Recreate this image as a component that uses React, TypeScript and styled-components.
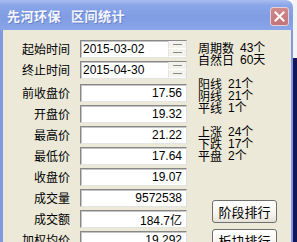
import React from "react";
import styled, { createGlobalStyle } from 'styled-components'

const GlobalStyle = createGlobalStyle`
  body {
    margin: 0;
    background: #ffffff;
    font-family: "Noto Sans CJK SC", "Liberation Sans", sans-serif;
  }
`

const frame = '#8099e0'

const Screen = styled.div`display: flex;
  width: 297px;
  height: 242px;
  overflow: hidden;`
const Window = styled.div`width: 293px;
  display: flex;
  flex-direction: column;`
const TitleBar = styled.div`height: 30px;
  flex: none;
  display: flex;
  align-items: center;
  justify-content: space-between;
  padding: 0 4px 0 7px;
  border-top-right-radius: 7px;
  background: linear-gradient(180deg, #a9bdf0 0%, #8aa5e8 18%, #7f9ce4 60%, #8ba6e9 100%);`
const Caption = styled.div`display: flex;
  gap: 10px;
  color: #f4f6ff;
  font-size: 13px;
  font-weight: bold;
  text-shadow: 1px 1px 0 #6a84cc;
  letter-spacing: 0.5px;`
const CloseButton = styled.div`width: 19px;
  height: 19px;
  margin-top: 3px;
  box-sizing: border-box;
  border: 1px solid #e9d0d4;
  border-radius: 3px;
  background: linear-gradient(180deg, #d08a8c 0%, #c27478 100%);
  display: flex;
  align-items: center;
  justify-content: center;`
const Body = styled.div`flex: 1;
  display: flex;
  background: #ece9d8;
  border-left: 3px solid ${frame};
  border-right: 2px solid ${frame};
  padding-top: 10px;`
const Form = styled.div`display: flex;
  flex-direction: column;
  gap: 5px;`
const Group = styled.div`display: grid;
  grid-template-columns: 67px 107px;
  grid-auto-rows: 18px;
  column-gap: 10px;
  row-gap: 3px;`
const Label = styled.div`font-size: 12px;
  color: #000;
  text-align: right;
  line-height: 18px;
  white-space: nowrap;`
const Field = styled.div<{ $align?: string }>`box-sizing: border-box;
  height: 18px;
  background: #fff;
  border: 1px solid;
  border-color: #878787 #dedede #e4e4e4 #878787;
  box-shadow: inset 1px 1px 0 #c4c4c4;
  display: flex;
  align-items: center;
  justify-content: ${p => p.$align === 'left' ? 'flex-start' : 'flex-end'};
  padding: ${p => p.$align === 'left' ? '0 0 0 2px' : '0 4px 0 0'};
  font-family: "Liberation Sans", "Noto Sans CJK SC", sans-serif;
  font-size: 12px;
  color: #000;
  position: relative;`
const Spinner = styled.div`position: absolute;
  right: 0;
  top: 0;
  bottom: 0;
  width: 18px;
  display: flex;
  flex-direction: column;`
const SpinHalf = styled.div`flex: 1;
  background: #f3f2ec;
  border-left: 1px solid #e6e4dc;
  border-bottom: 1px solid #fff;
  display: flex;
  align-items: center;
  justify-content: center;
  &::after {
    content: '';
    width: 9px;
    height: 1px;
    background: #8a8a8a;
  }`
const Side = styled.div`margin-left: 11px;
  display: flex;
  flex-direction: column;`
const Stats = styled.div`margin-top: 2px;
  font-size: 12px;
  line-height: 12px;
  color: #000;`
const StatLine = styled.div`height: 12px;
  display: flex;
  white-space: nowrap;`
const StatVal = styled.span`margin-left: 6px;
  font-family: "Liberation Sans", "Noto Sans CJK SC", sans-serif;`
const Buttons = styled.div`margin-top: 38px;
  margin-left: 14px;
  display: flex;
  flex-direction: column;
  gap: 6px;`
const Button = styled.div`width: 65px;
  height: 23px;
  box-sizing: border-box;
  border: 1px solid #6f6f6f;
  border-radius: 3px;
  background: linear-gradient(180deg, #ffffff 0%, #f6f5f0 60%, #e3e1d6 100%);
  display: flex;
  align-items: center;
  justify-content: center;
  font-size: 13px;
  color: #000;`
const Strip = styled.div`flex: 1;
  display: flex;
  flex-direction: column;`
const StripTop = styled.div`height: 58px;
  background: #f4f4f4;`
const StripBottom = styled.div`flex: 1;
  background: #14145a;`

const dates = [['起始时间', '2015-03-02'], ['终止时间', '2015-04-30']]
const values = [
	['前收盘价', '17.56'],
	['开盘价', '19.32'],
	['最高价', '21.22'],
	['最低价', '17.64'],
	['收盘价', '19.07'],
	['成交量', '9572538'],
	['成交额', '184.7亿'],
	['加权均价', '19.292'],
]
const stats: (string[] | null)[] = [
	['周期数', '43个'],
	['自然日', '60天'],
	null,
	['阳线', '21个'],
	['阴线', '21个'],
	['平线', '1个'],
	null,
	['上涨', '24个'],
	['下跌', '17个'],
	['平盘', '2个'],
]

const App = () => {
	return (
		<>
			<GlobalStyle/>
			<Screen>
				<Window>
					<TitleBar>
						<Caption><span>先河环保</span><span>区间统计</span></Caption>
						<CloseButton>
							<svg width="11" height="11" viewBox="0 0 11 11">
								<path d="M1.5 1.5 L9.5 9.5 M9.5 1.5 L1.5 9.5" stroke="#fff" strokeWidth="2" strokeLinecap="square"/>
							</svg>
						</CloseButton>
					</TitleBar>
					<Body>
						<Form>
							<Group>
								{dates.map(([label, value]) => (
									<React.Fragment key={label}>
										<Label>{label}</Label>
										<Field $align="left">
											{value}
											<Spinner><SpinHalf/><SpinHalf/></Spinner>
										</Field>
									</React.Fragment>
								))}
							</Group>
							<Group>
								{values.map(([label, value]) => (
									<React.Fragment key={label}>
										<Label>{label}</Label>
										<Field>{value}</Field>
									</React.Fragment>
								))}
							</Group>
						</Form>
						<Side>
							<Stats>
								{stats.map((s, i) => (
									<StatLine key={i}>
										{s && <><span>{s[0]}</span><StatVal>{s[1]}</StatVal></>}
									</StatLine>
								))}
							</Stats>
							<Buttons>
								<Button>阶段排行</Button>
								<Button>板块排行</Button>
							</Buttons>
						</Side>
					</Body>
				</Window>
				<Strip>
					<StripTop/>
					<StripBottom/>
				</Strip>
			</Screen>
		</>
	)
}

export default App
